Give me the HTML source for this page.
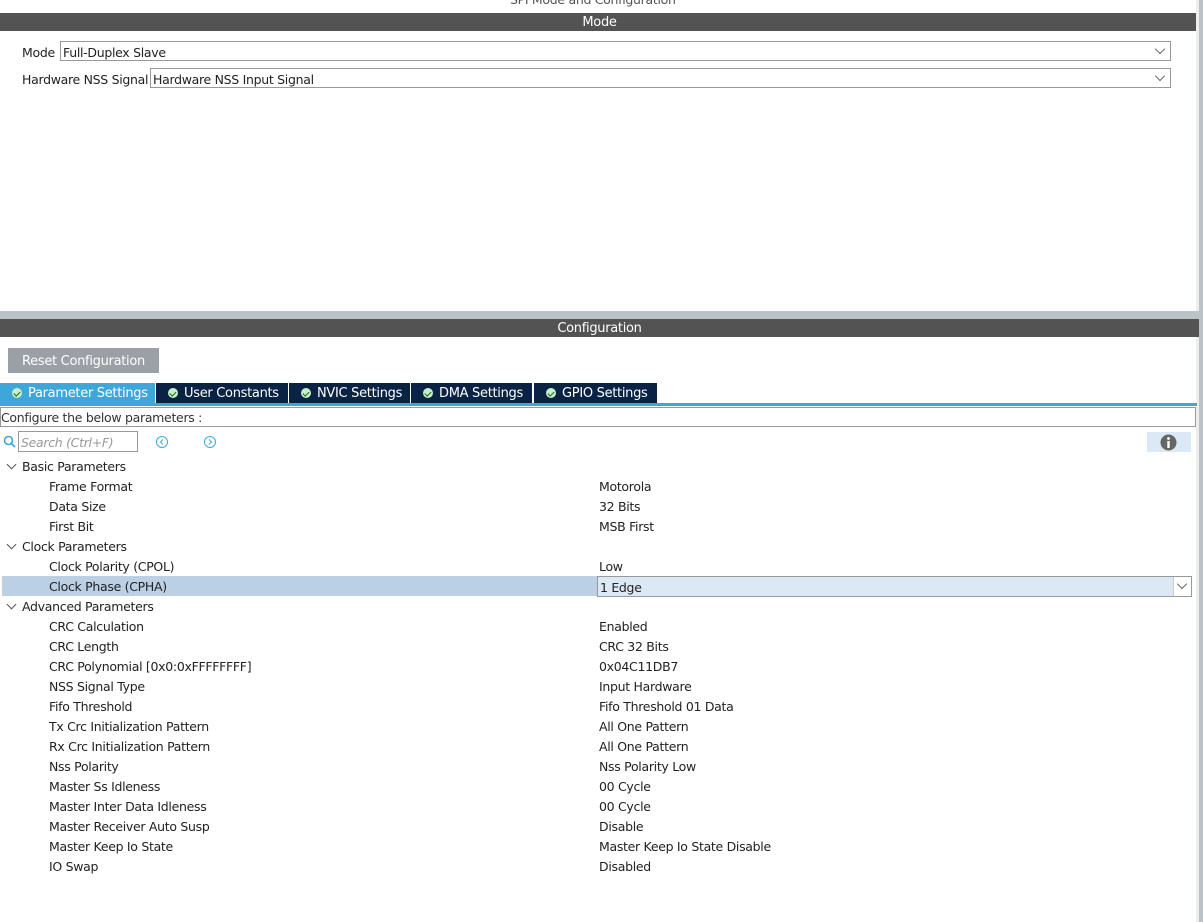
<!DOCTYPE html><html><head><style>
body{margin:0;width:1203px;height:922px;position:relative;overflow:hidden;background:#fff;font-family:"DejaVu Sans","Liberation Sans",sans-serif;font-size:12.5px;color:#222;letter-spacing:-0.3px}
.a{position:absolute}
.bar{position:absolute;left:0;width:1199px;background:#535353;color:#fff;text-align:center;font-size:13px;line-height:20px;height:18px}
.sel{position:absolute;border:1px solid #999;height:20px;line-height:21px;padding-left:2px;box-sizing:border-box;background:#fff}
.chev{position:absolute;right:6px;width:7px;height:7px;border-right:1px solid #555;border-bottom:1px solid #555;transform:rotate(45deg) scale(.9);top:3px}
.tab{position:absolute;top:383px;height:20px;line-height:21px;background:#0a2244;color:#fff;font-size:13px}
.ck{display:inline-block;width:10px;height:10px;border-radius:50%;background:#c8f0c8;margin:0 6px 0 12px;position:relative;vertical-align:-1px}
.ck:after{content:"";position:absolute;left:3px;top:1.5px;width:2.5px;height:5px;border-right:1.5px solid #1b6b2b;border-bottom:1.5px solid #1b6b2b;transform:rotate(45deg)}
.r{position:absolute;left:0;width:1196px;height:20px;line-height:22px}
.r .k{position:absolute;left:49px}.r .v{position:absolute;left:599px}
.g{position:absolute;left:22px}
.gc{position:absolute;left:8px;top:5px;width:6px;height:6px;border-right:1px solid #555;border-bottom:1px solid #555;transform:rotate(45deg)}
</style></head><body>
<div class="a" style="left:510px;top:-8px;color:#555">SPI Mode and Configuration</div>
<div class="bar" style="top:13px">Mode</div>
<div class="a" style="left:22px;top:45px">Mode</div>
<div class="sel" style="left:60px;top:41px;width:1111px">Full-Duplex Slave<div class="chev"></div></div>
<div class="a" style="left:22px;top:72px">Hardware NSS Signal</div>
<div class="sel" style="left:150px;top:68px;width:1021px">Hardware NSS Input Signal<div class="chev"></div></div>
<div class="a" style="left:1196px;top:0;width:3px;height:922px;background:#eee"></div>
<div class="a" style="left:1199px;top:0;width:4px;height:922px;background:#b9c3c8"></div>
<div class="a" style="left:0;top:311px;width:1199px;height:8px;background:#b9c3c8"></div>
<div class="bar" style="top:319px">Configuration</div>
<div class="a" style="left:8px;top:348px;width:151px;height:25px;background:#9aa0a5;color:#fff;text-align:center;line-height:27px;font-size:13px">Reset Configuration</div>
<div class="tab" style="left:0;width:155px;background:#3ea6d8"><span class="ck"></span>Parameter Settings</div>
<div class="tab" style="left:156px;width:132px"><span class="ck"></span>User Constants</div>
<div class="tab" style="left:289px;width:121px"><span class="ck"></span>NVIC Settings</div>
<div class="tab" style="left:411px;width:121px"><span class="ck"></span>DMA Settings</div>
<div class="tab" style="left:534px;width:123px"><span class="ck"></span>GPIO Settings</div>
<div class="a" style="left:0;top:403px;width:1197px;height:3px;background:#3ea6d8"></div>
<div class="a" style="left:0;top:407px;width:1194px;height:18px;border:1px solid #999;line-height:20px;color:#333">Configure the below parameters :</div>
<svg class="a" style="left:3px;top:435px" width="14" height="14"><circle cx="5.5" cy="5.5" r="4" fill="none" stroke="#3ea6d8" stroke-width="1.6"/><line x1="8.5" y1="8.5" x2="12" y2="12" stroke="#3ea6d8" stroke-width="1.8"/></svg>
<div class="a" style="left:18px;top:431px;border:1px solid #999;line-height:21px;color:#999;font-style:italic;padding-left:2px;box-sizing:border-box;width:120px;height:21px">Search (Ctrl+F)</div>
<svg class="a" style="left:155px;top:435px" width="14" height="14"><circle cx="7" cy="7" r="5.5" fill="none" stroke="#3ea6d8"/><path d="M8 4.5L5.5 7 8 9.5" fill="none" stroke="#3ea6d8"/></svg>
<svg class="a" style="left:203px;top:435px" width="14" height="14"><circle cx="7" cy="7" r="5.5" fill="none" stroke="#3ea6d8"/><path d="M6 4.5L8.5 7 6 9.5" fill="none" stroke="#3ea6d8"/></svg>
<div class="a" style="left:1147px;top:432px;width:44px;height:20px;background:#dbe9f6"></div>
<svg class="a" style="left:1160px;top:434px" width="17" height="17"><circle cx="8.5" cy="8.5" r="8" fill="#666"/><circle cx="8.5" cy="4.5" r="1.4" fill="#fff"/><rect x="7.3" y="7" width="2.4" height="7" fill="#fff"/></svg>
<div class="r" style="top:456px"><span class="gc"></span><span class="g">Basic Parameters</span></div>
<div class="r" style="top:476px"><span class="k">Frame Format</span><span class="v">Motorola</span></div>
<div class="r" style="top:496px"><span class="k">Data Size</span><span class="v">32 Bits</span></div>
<div class="r" style="top:516px"><span class="k">First Bit</span><span class="v">MSB First</span></div>
<div class="r" style="top:536px"><span class="gc"></span><span class="g">Clock Parameters</span></div>
<div class="r" style="top:556px"><span class="k">Clock Polarity (CPOL)</span><span class="v">Low</span></div>
<div class="r" style="top:576px;left:2px;width:595px;background:#bcd0e5"><span class="k" style="left:47px">Clock Phase (CPHA)</span></div>
<div class="sel" style="left:597px;top:576px;width:595px;background:#dbe9f6;height:21px">1 Edge<div style="position:absolute;right:0;top:0;width:17px;height:19px;background:#fff;border-left:1px solid #ccc"><div class="chev" style="right:5px"></div></div></div>
<div class="r" style="top:596px"><span class="gc"></span><span class="g">Advanced Parameters</span></div>
<div class="r" style="top:616px"><span class="k">CRC Calculation</span><span class="v">Enabled</span></div>
<div class="r" style="top:636px"><span class="k">CRC Length</span><span class="v">CRC 32 Bits</span></div>
<div class="r" style="top:656px"><span class="k">CRC Polynomial [0x0:0xFFFFFFFF]</span><span class="v">0x04C11DB7</span></div>
<div class="r" style="top:676px"><span class="k">NSS Signal Type</span><span class="v">Input Hardware</span></div>
<div class="r" style="top:696px"><span class="k">Fifo Threshold</span><span class="v">Fifo Threshold 01 Data</span></div>
<div class="r" style="top:716px"><span class="k">Tx Crc Initialization Pattern</span><span class="v">All One Pattern</span></div>
<div class="r" style="top:736px"><span class="k">Rx Crc Initialization Pattern</span><span class="v">All One Pattern</span></div>
<div class="r" style="top:756px"><span class="k">Nss Polarity</span><span class="v">Nss Polarity Low</span></div>
<div class="r" style="top:776px"><span class="k">Master Ss Idleness</span><span class="v">00 Cycle</span></div>
<div class="r" style="top:796px"><span class="k">Master Inter Data Idleness</span><span class="v">00 Cycle</span></div>
<div class="r" style="top:816px"><span class="k">Master Receiver Auto Susp</span><span class="v">Disable</span></div>
<div class="r" style="top:836px"><span class="k">Master Keep Io State</span><span class="v">Master Keep Io State Disable</span></div>
<div class="r" style="top:856px"><span class="k">IO Swap</span><span class="v">Disabled</span></div>
</body></html>
